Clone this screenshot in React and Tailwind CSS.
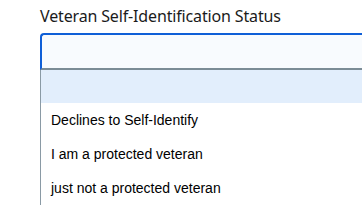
export default function App() {
  const options = ['Declines to Self-Identify', 'I am a protected veteran', 'just not a protected veteran'];
  return (
    <div className="w-[362px] h-[205px] overflow-hidden bg-white">
      <div className="pl-[40px] pt-[5px]">
        <label className="block h-[28px] text-[16px] leading-[22px] tracking-[-0.15px] text-[#1b1b1b] font-['Noto_Sans',sans-serif]">
          Veteran Self-Identification Status
        </label>
        <div className="h-[37px] w-[340px] rounded-tl-[4px] border-t-2 border-l-2 border-[#0f5fd7] border-b-2 border-b-[#7b8c96] bg-[#f8fbfe]" />
        <div className="w-[330px] border-l border-[#8a9aa5] font-['Liberation_Sans',Arial,sans-serif] text-[14px] text-black">
          <div className="h-[33px] bg-[#e2eefc]" />
          {options.map((o) => (
            <div key={o} className="h-[34px] flex items-center pl-[10px]">{o}</div>
          ))}
        </div>
      </div>
    </div>
  );
}
